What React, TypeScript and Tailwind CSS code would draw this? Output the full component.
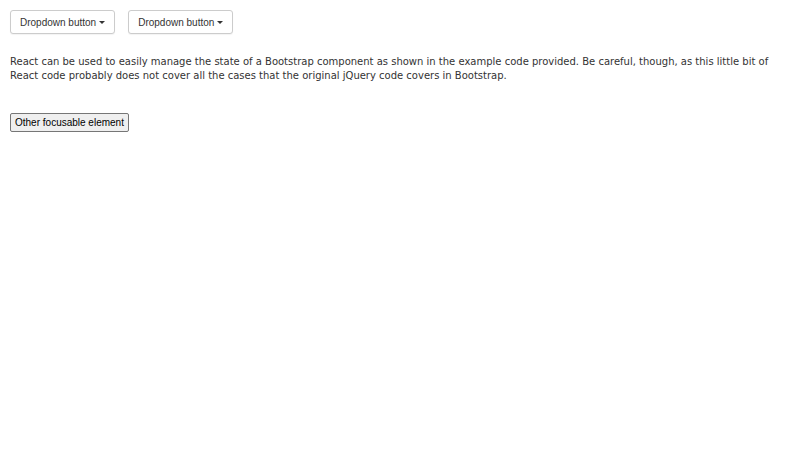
import { useState } from "react";

function DropdownButton() {
  const [open, setOpen] = useState(false);
  return (
    <div className="relative">
      <button
        type="button"
        onClick={() => setOpen(!open)}
        className="flex h-[24px] items-center gap-[3px] rounded-[3px] border border-[#cccccc] bg-white px-[9px] text-[10px] text-[#333333] shadow-[0_1px_1px_rgba(0,0,0,0.05)] font-['Liberation_Sans',Arial,sans-serif]"
      >
        Dropdown button
        <span className="mt-[1px] inline-block h-0 w-0 border-x-[3px] border-t-[3px] border-x-transparent border-t-[#333333]" />
      </button>
    </div>
  );
}

export default function App() {
  return (
    <div className="min-h-[450px] bg-white p-[10px] font-['DejaVu_Sans',sans-serif] text-[#333333]">
      <div className="flex gap-[13px]">
        <DropdownButton />
        <DropdownButton />
      </div>
      <p className="mt-[21px] text-[10px] leading-[14px]">
        React can be used to easily manage the state of a Bootstrap component as shown in the example code provided. Be careful, though, as this little bit of React code probably does not cover all the cases that the original jQuery code covers in Bootstrap.
      </p>
      <button
        type="button"
        className="mt-[30px] h-[19px] rounded-[2px] border border-[#767676] bg-[#efefef] px-[4px] text-[10px] leading-[12px] text-black font-['Liberation_Sans',Arial,sans-serif]"
      >
        Other focusable element
      </button>
    </div>
  );
}
